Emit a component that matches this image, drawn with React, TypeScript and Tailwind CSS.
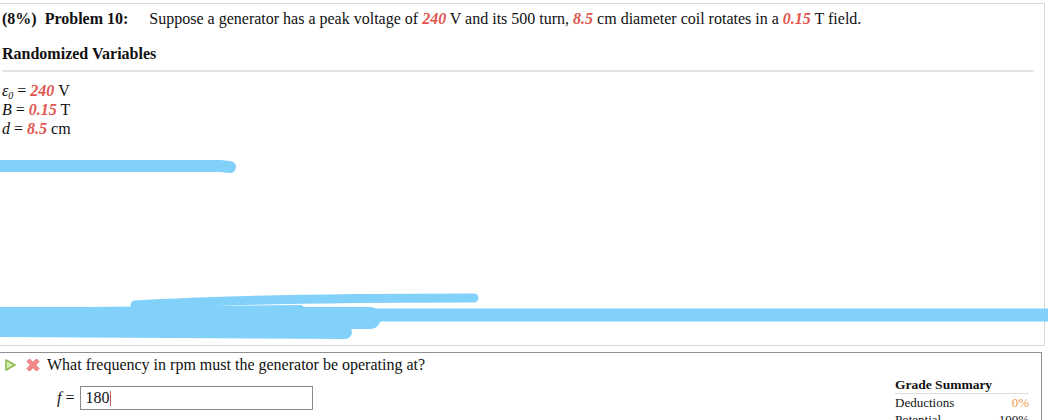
import React from 'react'

const serif = { fontFamily: '"Liberation Serif", "Times New Roman", serif' }

function Val({ children }: { children: React.ReactNode }) {
  return <span className="font-bold italic text-[#e0564e]">{children}</span>
}

function PlayIcon() {
  return (
    <svg width="14" height="14" viewBox="0 0 14 14">
      <path d="M3 2 L12 7 L3 12 Z" fill="#d6ecb0" stroke="#8dbb52" strokeWidth="1.6" strokeLinejoin="round" />
    </svg>
  )
}

function CrossIcon() {
  return (
    <svg width="14" height="14" viewBox="0 0 14 14">
      <path
        d="M1 3.5 L3.5 1 L7 4.5 L10.5 1 L13 3.5 L9.5 7 L13 10.5 L10.5 13 L7 9.5 L3.5 13 L1 10.5 L4.5 7 Z"
        fill="#f58a8a"
        stroke="#e05555"
        strokeWidth="0.8"
        strokeLinejoin="round"
      />
    </svg>
  )
}

function Scribbles() {
  return (
    <svg className="pointer-events-none absolute left-0 top-0" width="1048" height="420" viewBox="0 0 1048 420">
      <g stroke="#82d1fb" strokeLinecap="round" fill="none">
        <path d="M-4 166 L220 166 L230 167" strokeWidth="12" />
        <path d="M135 305 C 220 300 320 298 474 298" strokeWidth="9" />
        <path d="M-4 318 L370 318" strokeWidth="22" />
        <path d="M-4 330 L345 332" strokeWidth="14" />
        <path d="M200 315 L1060 315" strokeWidth="13" />
        <path d="M80 312 L300 310" strokeWidth="10" />
      </g>
    </svg>
  )
}

export default function App() {
  return (
    <div className="relative h-[420px] w-[1048px] overflow-hidden bg-white text-[16px] text-[#111]" style={serif}>
      <div className="mt-[3px] h-[343px] w-[1045px] border-b border-r border-t border-[#d6d6d6] pl-[2px] pr-[10px]">
        <div className="mt-[5px] leading-[19px]">
          <span className="font-bold">(8%)&nbsp; Problem 10:</span>
          <span className="ml-[21px]">
            Suppose a generator has a peak voltage of <Val>240</Val> V and its 500 turn, <Val>8.5</Val> cm diameter coil
            rotates in a <Val>0.15</Val> T field.
          </span>
        </div>
        <div className="mt-[16px] font-bold leading-[19px]">Randomized Variables</div>
        <div className="mt-[7px] h-[2px] rounded-full bg-[#e3e3e3]" />
        <div className="mt-[9px] leading-[19px]">
          <div>
            <i>ε<sub className="text-[10px]">0</sub></i> = <Val>240</Val> V
          </div>
          <div>
            <i>B</i> = <Val>0.15</Val> T
          </div>
          <div>
            <i>d</i> = <Val>8.5</Val> cm
          </div>
        </div>
      </div>

      <div className="mt-[6px] flex h-[80px] w-[1042px] items-start justify-between border-r border-t border-[#8f8f8f]">
        <div>
          <div className="mt-[2px] flex items-center pl-[3px] leading-[19px]">
            <PlayIcon />
            <span className="ml-[9px]">
              <CrossIcon />
            </span>
            <span className="ml-[7px]">What frequency in rpm must the generator be operating at?</span>
          </div>
          <div className="mt-[12px] flex items-center pl-[57px]">
            <span>
              <i>f</i> =
            </span>
            <div className="ml-[6px] flex h-[24px] w-[233px] items-center border border-[#8a8a8a] pl-[4px]">
              180<span className="ml-[1px] h-[15px] w-px bg-[#c06060]" />
            </div>
          </div>
        </div>
        <div className="mr-[12px] mt-[23px] w-[134px] text-[13px] leading-[17px]">
          <div className="border-b border-[#ddd] text-[13.5px] font-bold">Grade Summary</div>
          <div className="flex justify-between">
            <span>Deductions</span>
            <span className="text-[#ef9a4a]">0%</span>
          </div>
          <div className="flex justify-between">
            <span>Potential</span>
            <span>100%</span>
          </div>
        </div>
      </div>
      <Scribbles />
    </div>
  )
}
